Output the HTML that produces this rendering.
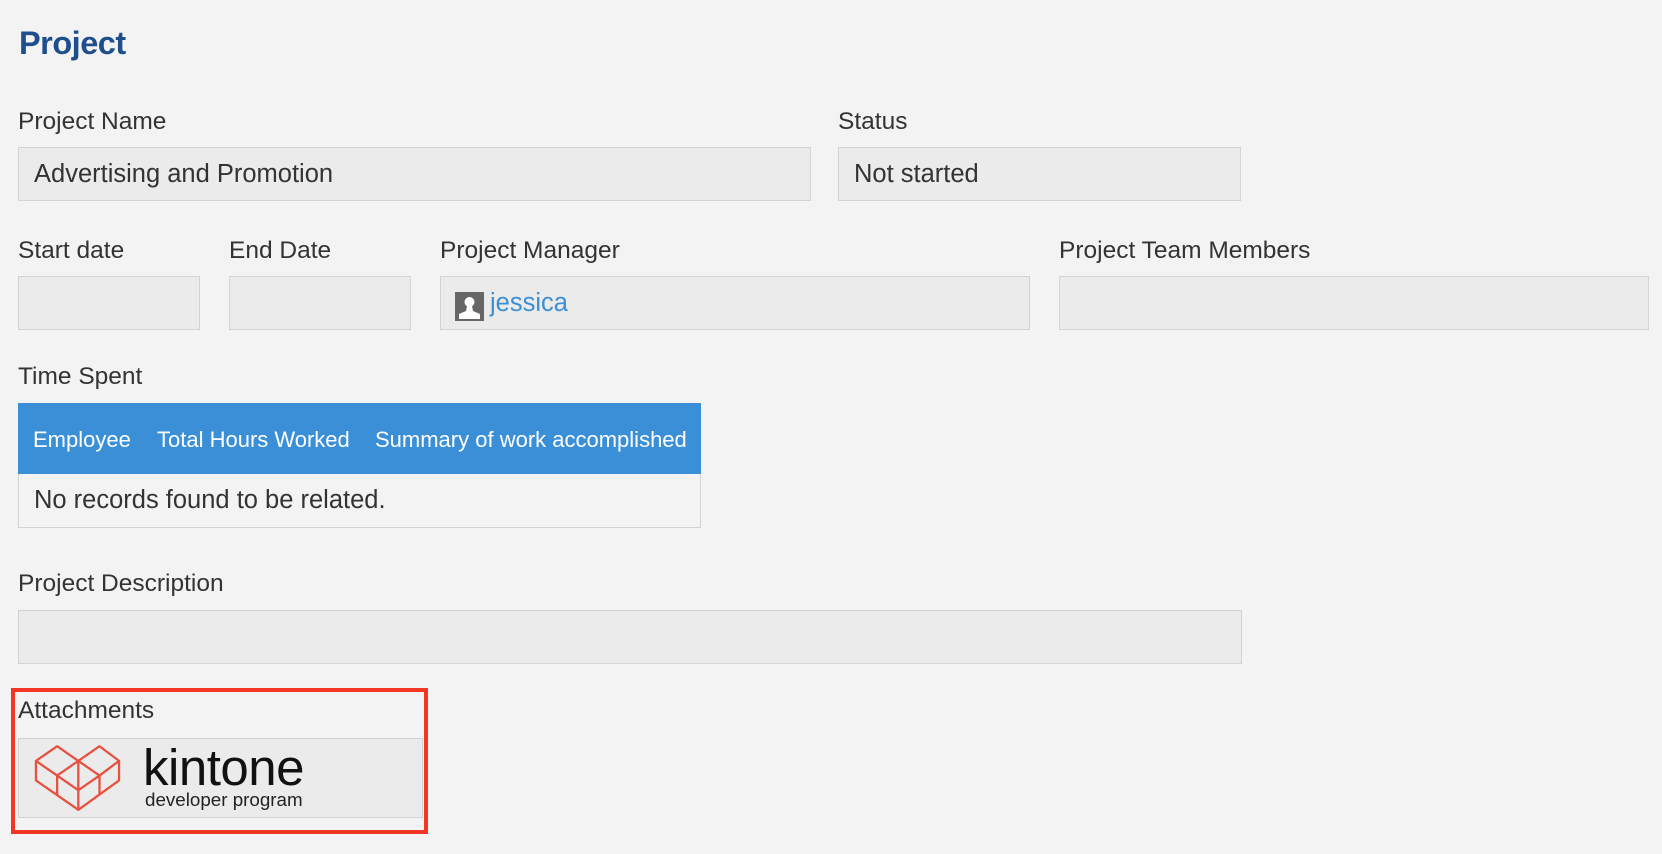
<!DOCTYPE html>
<html><head><meta charset="utf-8"><style>
body{margin:0;width:1662px;height:854px;background:#f3f3f3;font-family:"Liberation Sans",Arial,sans-serif;color:#333;position:relative;overflow:hidden}
.a{position:absolute}
.lbl{position:absolute;font-size:24.5px;color:#333;line-height:1}
.box{position:absolute;background:#ebebeb;border:1px solid #d3d3d3;box-sizing:border-box;font-size:25.5px;color:#333;line-height:1}
</style></head><body>
<div class="a" style="left:19px;top:25px;font-size:32.5px;font-weight:bold;color:#1f4e8c;letter-spacing:-0.5px">Project</div>

<div class="lbl" style="left:18px;top:110px">Project Name</div>
<div class="box" style="left:18px;top:147px;width:793px;height:54px"><span class="a" style="left:15px;top:14px">Advertising and Promotion</span></div>
<div class="lbl" style="left:838px;top:110px">Status</div>
<div class="box" style="left:838px;top:147px;width:403px;height:54px"><span class="a" style="left:15px;top:14px">Not started</span></div>

<div class="lbl" style="left:18px;top:239px">Start date</div>
<div class="lbl" style="left:229px;top:239px">End Date</div>
<div class="lbl" style="left:440px;top:239px">Project Manager</div>
<div class="lbl" style="left:1059px;top:239px">Project Team Members</div>
<div class="box" style="left:18px;top:276px;width:182px;height:54px"></div>
<div class="box" style="left:229px;top:276px;width:182px;height:54px"></div>
<div class="box" style="left:440px;top:276px;width:590px;height:54px">
  <svg class="a" style="left:14px;top:15px" width="29" height="29" viewBox="0 0 29 29"><rect width="29" height="29" fill="#666"/><circle cx="14.5" cy="10" r="5" fill="#fff"/><path d="M12 14 L17 14 L18 19 L25 22 L25 27 L4 27 L4 22 L11 19Z" fill="#fff"/></svg>
  <span class="a" style="left:49px;top:14px;color:#3a8fd6">jessica</span>
</div>
<div class="box" style="left:1059px;top:276px;width:590px;height:54px"></div>

<div class="lbl" style="left:18px;top:365px">Time Spent</div>
<div class="a" style="left:18px;top:403px;width:683px;height:71px;background:#3a8fd6;color:#fff;font-size:22px">
  <span class="a" style="left:15px;top:24px">Employee</span>
  <span class="a" style="left:139px;top:24px">Total Hours Worked</span>
  <span class="a" style="left:357px;top:24px">Summary of work accomplished</span>
</div>
<div class="box" style="left:18px;top:474px;width:683px;height:54px;background:#f3f3f3;border-top:none"><span class="a" style="left:15px;top:14px">No records found to be related.</span></div>

<div class="lbl" style="left:18px;top:572px">Project Description</div>
<div class="box" style="left:18px;top:610px;width:1224px;height:54px"></div>

<div class="a" style="left:11px;top:688px;width:417px;height:146px;border:4px solid #f23524;box-sizing:border-box"></div>
<div class="lbl" style="left:18px;top:699px">Attachments</div>
<div class="box" style="left:18px;top:738px;width:405px;height:80px">
  <svg class="a" style="left:15px;top:4px" width="87" height="70" viewBox="-6 -6 267 207"><g fill="none" stroke="#e8503f" stroke-width="7" stroke-linejoin="round">
  <path d="M0,45 L65,0 L130,45 L195,0 L255,45 L255,105 L130,195 L0,105 Z"/>
  <path d="M0,45 L65,90 L130,45 L195,90 L255,45"/>
  <path d="M65,90 L65,150 M195,90 L195,150 M130,45 L130,195 M65,90 L130,135 L195,90"/>
  </g></svg>
  <span class="a" style="left:124px;top:3px;font-size:51px;color:#111;letter-spacing:-0.5px">kintone</span>
  <span class="a" style="left:126px;top:52px;font-size:18.8px;color:#222">developer program</span>
</div>
</body></html>
